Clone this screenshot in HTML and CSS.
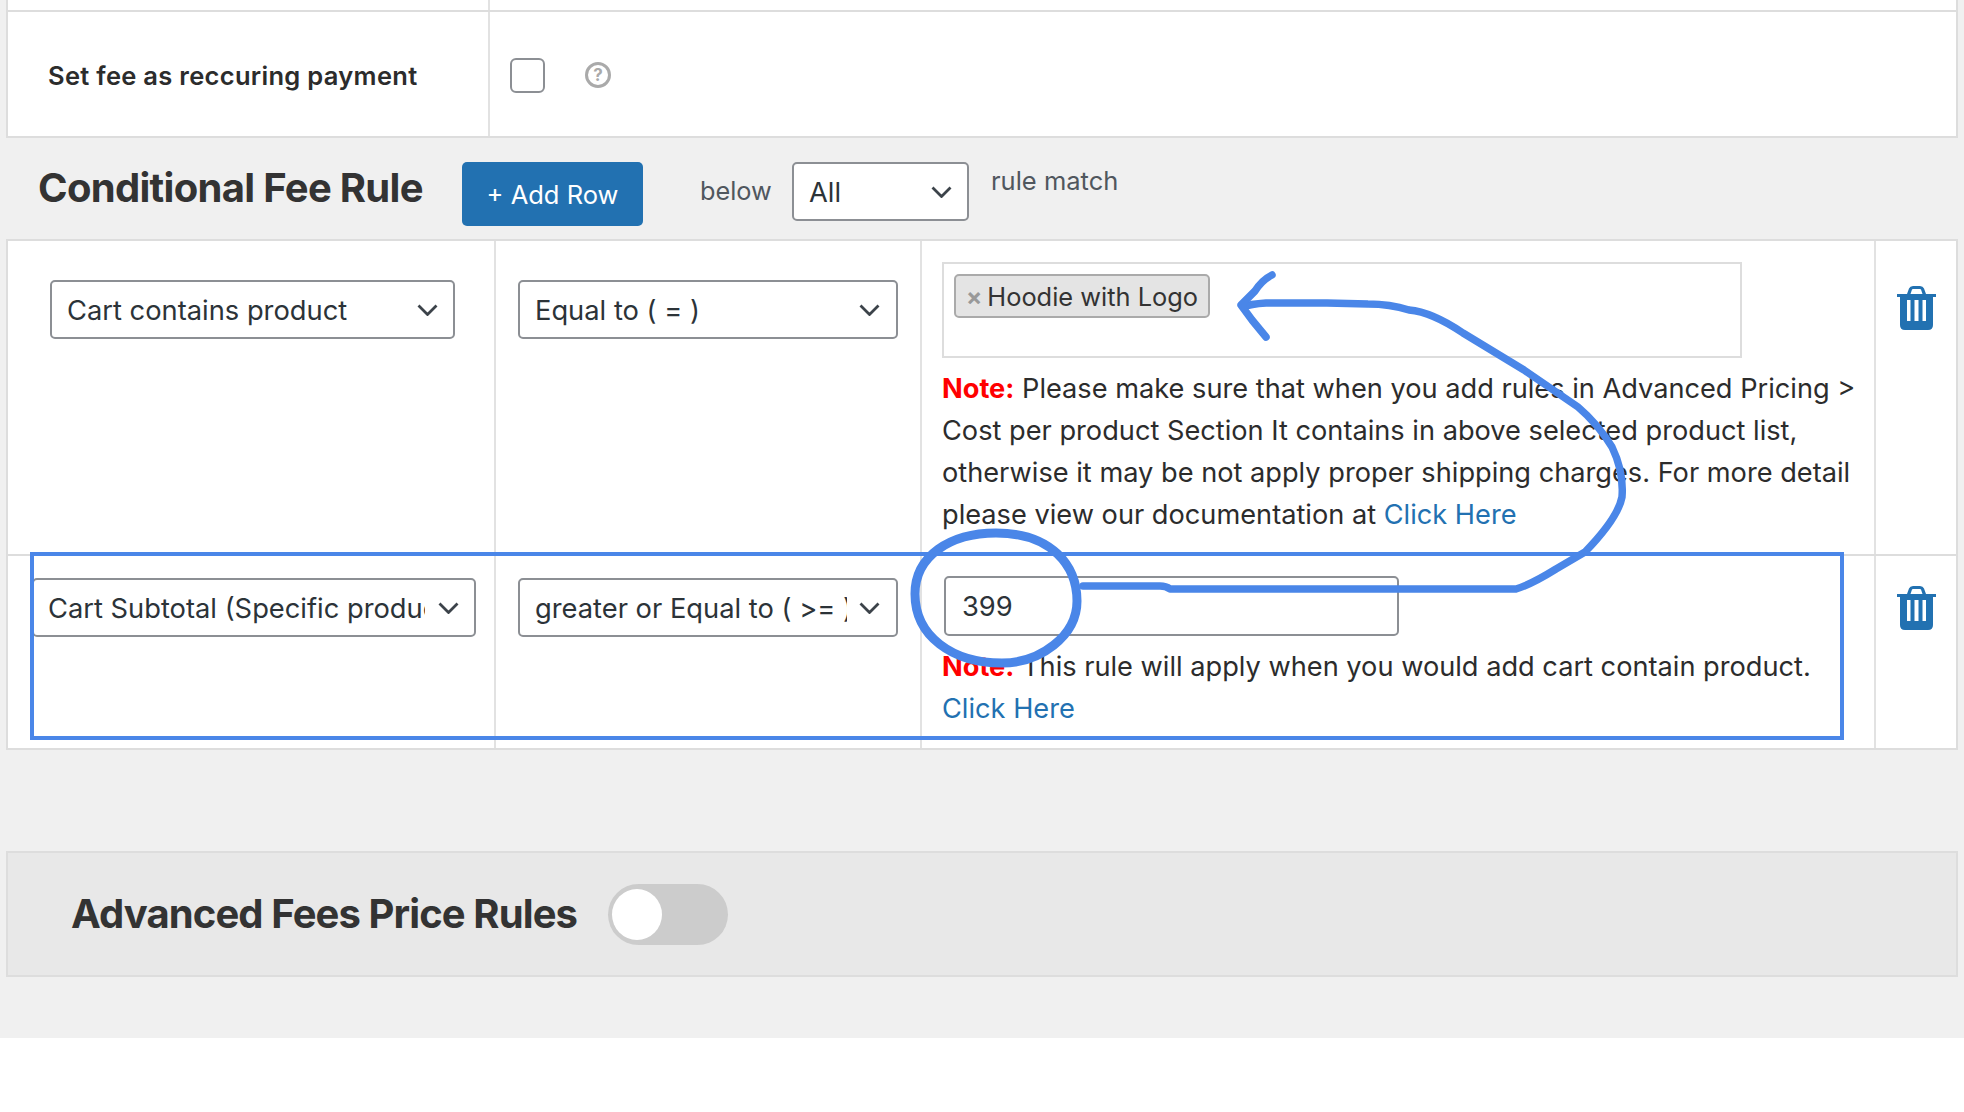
FILE: index.html
```html
<!DOCTYPE html>
<html lang="en">
<head>
<meta charset="utf-8">
<title>Conditional Fee Rule</title>
<link rel="stylesheet" href="styles.css">
</head>
<body>
<main class="page">
  <section class="settings">
    <div class="settings-row settings-stub"><div class="label-cell"></div><div class="value-cell"></div></div>
    <div class="settings-row settings-main">
      <div class="label-cell"><strong class="row-label">Set fee as reccuring payment</strong></div>
      <div class="value-cell">
        <span class="checkbox"></span>
        <span class="help">?</span>
      </div>
    </div>
  </section>

  <header class="rule-head">
    <h2 class="rule-title">Conditional Fee Rule</h2>
    <button class="add-row">+ Add Row</button>
    <span class="below">below</span>
    <div class="select select-all"><span class="select-text">All</span><svg class="chev" viewBox="0 0 21 12"><path d="M1.5 1.5 10.5 10.5 19.5 1.5"/></svg></div>
    <span class="rule-match">rule match</span>
  </header>

  <section class="rules">
    <div class="rule rule-first">
      <div class="cell cell-a">
        <div class="select select-a"><span class="select-text">Cart contains product</span><svg class="chev" viewBox="0 0 21 12"><path d="M1.5 1.5 10.5 10.5 19.5 1.5"/></svg></div>
      </div>
      <div class="cell cell-b">
        <div class="select select-b"><span class="select-text">Equal to ( = )</span><svg class="chev" viewBox="0 0 21 12"><path d="M1.5 1.5 10.5 10.5 19.5 1.5"/></svg></div>
      </div>
      <div class="cell cell-c">
        <div class="multi"><span class="chip"><span class="chip-x">×</span>Hoodie with Logo</span></div>
        <p class="note note-first"><b class="note-tag">Note:</b> Please make sure that when you add rules in Advanced Pricing &gt; Cost per product Section It contains in above selected product list, otherwise it may be not apply proper shipping charges. For more detail please view our documentation at <a class="link" href="#">Click Here</a></p>
      </div>
      <div class="cell cell-d">
        <svg class="trash" viewBox="0 0 39 44"><path class="trash-shape" fill-rule="evenodd" d="M10 8 12 2.500Q13 0 16 0H23Q26 0 27 2.500L29 8H39V11H36V39Q36 44 31 44H8Q3 44 3 39V11H0V8ZM13.500 8H25.500L24 3.500Q23.800 3 23 3H16Q15.200 3 15 3.500ZM10 14V35H13.500V14ZM17.500 14V35H21.500V14ZM25.500 14V35H29V14Z"/></svg>
      </div>
    </div>
    <div class="rule rule-second">
      <div class="cell cell-a">
        <div class="select select-a2"><span class="select-text">Cart Subtotal (Specific product)</span><svg class="chev" viewBox="0 0 21 12"><path d="M1.5 1.5 10.5 10.5 19.5 1.5"/></svg></div>
      </div>
      <div class="cell cell-b">
        <div class="select select-b"><span class="select-text">greater or Equal to ( &gt;= )</span><svg class="chev" viewBox="0 0 21 12"><path d="M1.5 1.5 10.5 10.5 19.5 1.5"/></svg></div>
      </div>
      <div class="cell cell-c">
        <div class="amount">399</div>
        <p class="note note-second"><b class="note-tag">Note:</b> This rule will apply when you would add cart contain product.<br><a class="link" href="#">Click Here</a></p>
      </div>
      <div class="cell cell-d">
        <svg class="trash" viewBox="0 0 39 44"><path class="trash-shape" fill-rule="evenodd" d="M10 8 12 2.500Q13 0 16 0H23Q26 0 27 2.500L29 8H39V11H36V39Q36 44 31 44H8Q3 44 3 39V11H0V8ZM13.500 8H25.500L24 3.500Q23.800 3 23 3H16Q15.200 3 15 3.500ZM10 14V35H13.500V14ZM17.500 14V35H21.500V14ZM25.500 14V35H29V14Z"/></svg>
      </div>
    </div>
  </section>

  <section class="advanced">
    <h2 class="advanced-title">Advanced Fees Price Rules</h2>
    <span class="toggle"><span class="knob"></span></span>
  </section>
</main>

<svg class="markup" viewBox="0 0 1964 1112" aria-hidden="true">
  <rect class="markup-box" x="32" y="554" width="1810" height="184"/>
  <path class="markup-line" d="M1083 586 H1160 Q1166 586 1170 589 H1516 Q1532 584 1556 569 L1585 552 Q1618 518 1622 497 Q1624 472 1612 447 Q1598 424 1578 407 L1524 370 L1463 333 Q1432 312 1409 310 Q1390 304 1368 304 L1327 303 H1266 Q1250 304 1243 307"/>
  <path class="markup-line" d="M1272 275 Q1262 280 1255 291 L1241 305 L1252 320 L1266 337"/>
  <path class="markup-ring" d="M996 533 C1052 533 1077 566 1077 601 C1077 636 1040 663 1002 663 C952 663 915 636 915 594 C915 556 950 533 996 533Z"/>
</svg>
</body>
</html>
```
FILE: styles.css
```css
* { box-sizing: border-box; }
html, body { margin: 0; background: #fff; }
body {
  position: relative;
  width: 1964px;
  height: 1112px;
  overflow: hidden;
  font-family: Inter, "Liberation Sans", sans-serif;
  color: #333;
}

.page {
  height: 1038px;
  padding: 0 6px;
  background: #f0f0f0;
}

/* settings table */
.settings {
  background: #fff;
  border-left: 2px solid #ddd;
  border-right: 2px solid #ddd;
}
.settings-row { display: grid; grid-template-columns: 482px 1fr; border-bottom: 2px solid #ddd; }
.settings-stub { height: 12px; }
.settings-main { height: 126px; }
.label-cell { border-right: 2px solid #e2e2e2; display: flex; align-items: center; padding: 2px 0 0 40px; }
.value-cell { display: flex; align-items: center; padding: 2px 0 0 20px; gap: 40px; }
.row-label { font-size: 25.500px; font-weight: 600; letter-spacing: 0.3px; color: #2c2c2c; }
.checkbox { width: 35px; height: 35px; border: 2.500px solid #8c8f94; border-radius: 6px; background: #fff; }
.help {
  width: 26px; height: 26px; border: 3px solid #aaa; border-radius: 50%;
  display: flex; align-items: center; justify-content: center;
  font-size: 17px; font-weight: 700; color: #aaa;
}

/* heading strip */
.rule-head { height: 101px; padding: 24px 0 0 32px; display: flex; align-items: flex-start; }
.rule-title { margin: 0; font-size: 40px; font-weight: 700; line-height: 52px; letter-spacing: -0.7px; color: #333; width: 424px; flex: none; }
.add-row {
  width: 181px; height: 64px; border: 0; border-radius: 5px; background: #2271b1; color: #fff;
  font: 400 25.500px Inter, "Liberation Sans", sans-serif;
  flex: none; margin-right: 57px;
}
.below { font-size: 25.300px; line-height: 30px; margin: 14px 20px 0 0; color: #50575e; width: 72px; }
.rule-match { font-size: 25.500px; line-height: 30px; margin: 4px 0 0 22px; color: #50575e; }

/* select */
.select {
  height: 59px; border: 2px solid #8c8f94; border-radius: 5px; background: #fff;
  display: flex; align-items: center; justify-content: space-between;
  padding: 1px 15px 0 15px; font-size: 27.300px; color: #2c3338; flex: none;
}
.select-text { white-space: nowrap; overflow: hidden; }
.chev { width: 21px; height: 12px; flex: none; margin-top: -1px; }
.chev path { fill: none; stroke: #3c434a; stroke-width: 2.800; }
.select-all { width: 177px; height: 59px; }
.select-a { width: 405px; }
.select-a2 { width: 444px; padding-left: 14px; }
.select-a2 .select-text { width: 377px; }
.select-b { width: 380px; padding-right: 16px; }
.select-b .select-text { width: 312px; }

/* rules table */
.rules { background: #fff; border: 2px solid #ddd; }
.rule { display: grid; grid-template-columns: 488px 426px 954px 1fr; }
.rule-first { height: 315px; border-bottom: 2px solid #ddd; }
.rule-second { height: 192px; }
.cell { border-right: 2px solid #e2e2e2; }
.cell-d { border-right: 0; }
.rule-first .cell-a { padding: 39px 0 0 42px; }
.rule-second .cell-a { padding: 22px 0 0 24px; }
.rule-first .cell-b { padding: 39px 0 0 22px; }
.rule-second .cell-b { padding: 22px 0 0 22px; }
.rule-first .cell-c { padding: 21px 0 0 20px; }
.rule-second .cell-c { padding: 20px 0 0 22px; }
.cell-d { display: flex; justify-content: center; align-items: flex-start; padding-top: 45px; }
.rule-second .cell-d { padding-top: 30px; }
.trash { width: 39px; height: 44px; }
.trash-shape { fill: #2271b1; }

.multi { width: 800px; height: 96px; border: 2px solid #ddd; padding: 10px; }
.chip {
  display: inline-flex; align-items: center; height: 44px; width: 256px; padding-left: 10px;
  background: #e4e4e4; border: 2px solid #aaa; border-radius: 5px;
  font-size: 25.400px; color: #333; white-space: nowrap;
}
.chip-x { color: #999; font-weight: 700; margin-right: 5px; font-size: 24px; }
.note { margin: 0; font-size: 27.200px; line-height: 42px; color: #2c2c2c; }
.note-first { margin-top: 10px; width: 932px; }
.note-second { margin: 10px 0 0 -2px; }
.note-tag { color: #f00; font-weight: 700; }
.link { color: #2271b1; text-decoration: none; }

.amount {
  width: 455px; height: 60px; border: 2px solid #8c8f94; border-radius: 5px; background: #fff;
  display: flex; align-items: center; padding-left: 16px; font-size: 27.300px; color: #2c3338;
}

/* advanced panel */
.advanced {
  margin-top: 101px; height: 126px; background: #e8e8e8; border: 2px solid #ddd;
  display: flex; align-items: center; padding: 0 0 1px 63px;
}
.advanced-title { margin: 0; font-size: 40px; font-weight: 700; letter-spacing: -0.9px; color: #333; width: 537px; flex: none; }
.toggle { position: relative; width: 120px; height: 61px; margin-top: 1px; border-radius: 31px; background: #ccc; }
.knob { position: absolute; left: 4px; top: 5px; width: 50px; height: 51px; border-radius: 50%; background: #fff; }

/* hand-drawn markup lying over the page */
.markup { position: absolute; left: 0; top: 0; width: 1964px; height: 1112px; pointer-events: none; }
.markup-box { fill: none; stroke: #4a86e8; stroke-width: 4; }
.markup-line { fill: none; stroke: #4a86e8; stroke-width: 7.500; stroke-linecap: round; stroke-linejoin: round; }
.markup-ring { fill: none; stroke: #4a86e8; stroke-width: 9; }
```
